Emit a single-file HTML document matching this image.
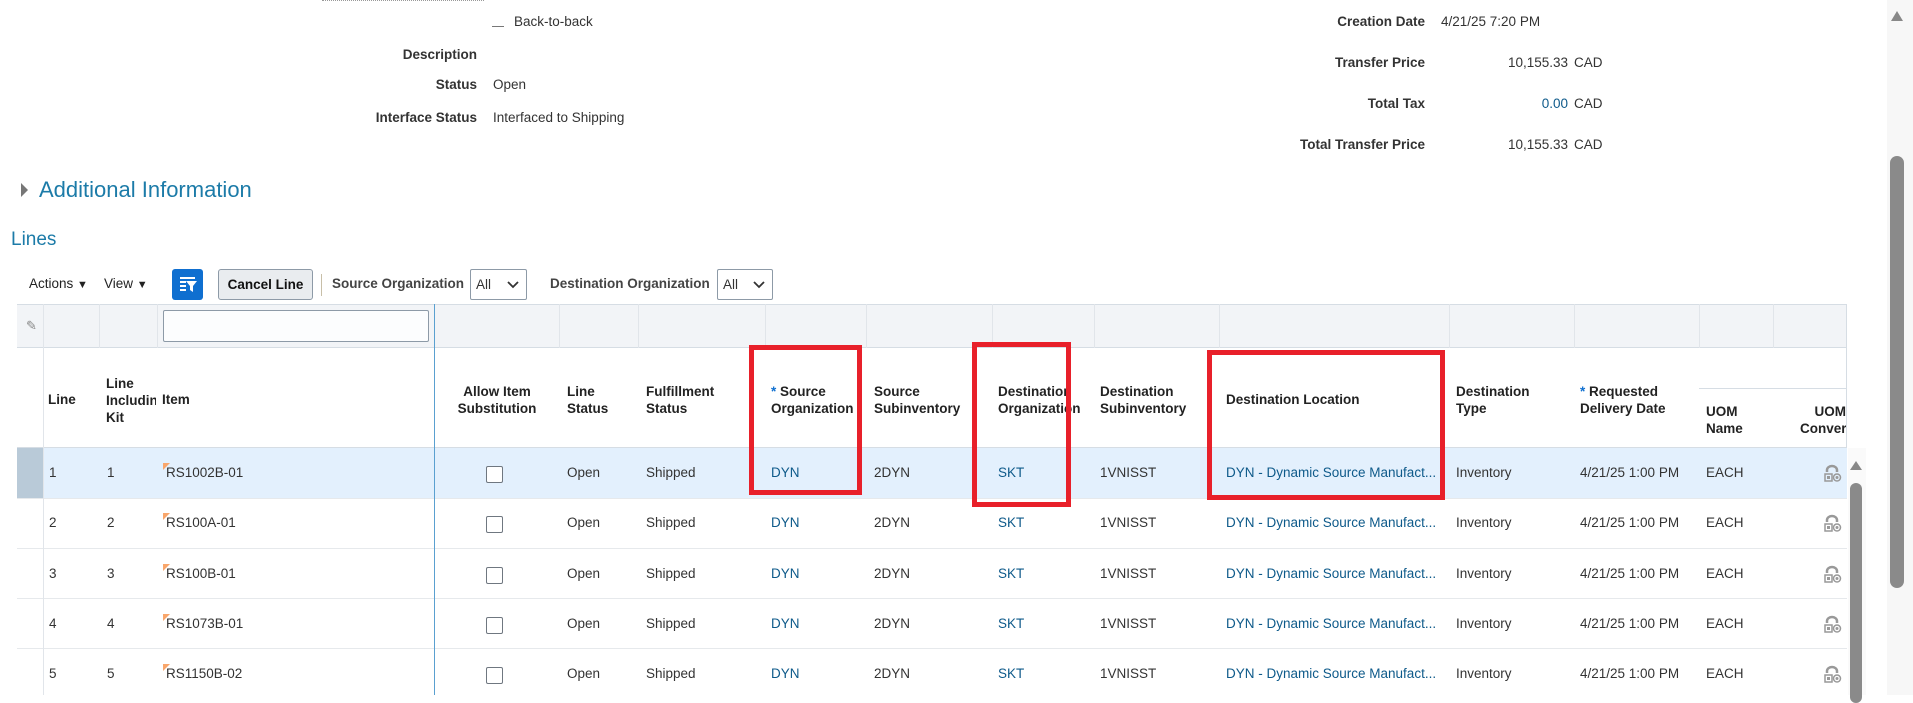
<!DOCTYPE html>
<html><head><meta charset="utf-8"><style>
*{margin:0;padding:0;box-sizing:border-box}
body{width:1913px;height:695px;overflow:hidden;background:#fff;font-family:"Liberation Sans",Arial,sans-serif;font-size:13.5px;color:#333;position:relative}
.a{position:absolute;white-space:nowrap}
.lb{font-weight:bold;color:#333;text-align:right}
.lnk{color:#0e5a8a}
.hd{font-weight:bold;color:#222;line-height:17px;font-size:13.5px}
.vl{position:absolute;width:1px;background:#e1e5ea}
.cb{position:absolute;width:17px;height:17px;border:1px solid #6f7780;border-radius:2px;background:#fff}
.tri{position:absolute;width:0;height:0;border-left:7px solid #f9a66b;border-bottom:7px solid transparent}
.rb{position:absolute;border:5px solid #e8202a}
</style></head><body>
<div class="a" style="left:322px;top:0;width:162px;height:1px;border-top:1px dotted #999"></div>
<div class="a" style="left:492px;top:26px;width:12px;height:1px;background:#777"></div>
<div class="a" style="left:514px;top:14px">Back-to-back</div>
<div class="a lb" style="right:1436px;top:47px">Description</div>
<div class="a lb" style="right:1436px;top:77px">Status</div>
<div class="a" style="left:493px;top:77px">Open</div>
<div class="a lb" style="right:1436px;top:110px">Interface Status</div>
<div class="a" style="left:493px;top:110px">Interfaced to Shipping</div>

<div class="a lb" style="right:488px;top:14px">Creation Date</div>
<div class="a" style="left:1441px;top:14px">4/21/25 7:20 PM</div>
<div class="a lb" style="right:488px;top:55px">Transfer Price</div>
<div class="a" style="right:345px;top:55px">10,155.33</div><div class="a" style="left:1574px;top:55px">CAD</div>
<div class="a lb" style="right:488px;top:96px">Total Tax</div>
<div class="a lnk" style="right:345px;top:96px">0.00</div><div class="a" style="left:1574px;top:96px">CAD</div>
<div class="a lb" style="right:488px;top:137px">Total Transfer Price</div>
<div class="a" style="right:345px;top:137px">10,155.33</div><div class="a" style="left:1574px;top:137px">CAD</div>

<div class="a" style="left:21px;top:183px;border-left:7px solid #777;border-top:7px solid transparent;border-bottom:7px solid transparent"></div>
<div class="a" style="left:39px;top:177px;font-size:22px;color:#1c7ba8">Additional Information</div>
<div class="a" style="left:11px;top:229px;font-size:19px;color:#1c7ba8">Lines</div>

<div class="a" style="left:29px;top:276px;color:#222">Actions <span style="font-size:11px">&#9660;</span></div>
<div class="a" style="left:104px;top:276px;color:#222">View <span style="font-size:11px">&#9660;</span></div>
<div class="a" style="left:172px;top:269px;width:31px;height:31px;background:#0f6fd0;border-radius:3px">
<svg width="31" height="31" viewBox="0 0 31 31"><g fill="#fff"><rect x="8" y="8" width="15" height="2"/><rect x="8" y="12" width="6" height="2"/><rect x="8" y="16" width="6" height="2"/><rect x="8" y="20" width="6" height="2"/><path d="M14 12h11l-4 5v6l-3-2v-4z"/></g></svg></div>
<div class="a" style="left:218px;top:269px;width:95px;height:31px;border:1px solid #8d9aa7;border-radius:3px;background:#e9ecef;font-weight:bold;color:#111;text-align:center;line-height:29px">Cancel Line</div>
<div class="a" style="left:321px;top:274px;width:1px;height:22px;background:#c8bfa8"></div>
<div class="a" style="left:332px;top:276px;font-weight:bold;color:#444">Source Organization</div>
<div class="a" style="left:470px;top:269px;width:57px;height:31px;border:1px solid #8d9aa7;border-radius:2px;padding:7px 5px">All<svg style="position:absolute;right:7px;top:11px" width="12" height="8" viewBox="0 0 12 8"><path d="M1 1l5 5 5-5" fill="none" stroke="#333" stroke-width="1.8"/></svg></div>
<div class="a" style="left:550px;top:276px;font-weight:bold;color:#444">Destination Organization</div>
<div class="a" style="left:717px;top:269px;width:56px;height:31px;border:1px solid #8d9aa7;border-radius:2px;padding:7px 5px">All<svg style="position:absolute;right:7px;top:11px" width="12" height="8" viewBox="0 0 12 8"><path d="M1 1l5 5 5-5" fill="none" stroke="#333" stroke-width="1.8"/></svg></div>

<div class="a" style="left:17px;top:304px;width:1830px;height:44px;background:#f2f4f7;border-top:1px solid #d6dde4;border-bottom:1px solid #d6dde4"></div>
<div class="a" style="left:26px;top:318px;font-size:13px;color:#888">&#9998;</div>
<div class="a" style="left:163px;top:310px;width:266px;height:32px;border:1px solid #8d9aa7;border-radius:2px;background:#fcfdfe"></div>
<div class="a" style="left:17px;top:448px;width:1830px;height:50px;background:#e3f0fd"></div>
<div class="a" style="left:17px;top:448px;width:26px;height:50px;background:#b9cad8"></div>
<div class="a" style="left:17px;top:447px;width:1830px;height:1px;background:#d6dde4"></div>
<div class="a" style="left:17px;top:498px;width:1830px;height:1px;background:#e6e9ec"></div>
<div class="a" style="left:17px;top:548px;width:1830px;height:1px;background:#e6e9ec"></div>
<div class="a" style="left:17px;top:598px;width:1830px;height:1px;background:#e6e9ec"></div>
<div class="a" style="left:17px;top:648px;width:1830px;height:1px;background:#e6e9ec"></div>
<div class="a" style="left:1699px;top:388px;width:148px;height:1px;background:#d6dde4"></div>
<div class="vl" style="left:43px;top:304px;height:391px"></div>
<div class="vl" style="left:99px;top:304px;height:44px"></div>
<div class="vl" style="left:157px;top:304px;height:44px"></div>
<div class="a" style="left:434px;top:304px;width:1px;height:391px;background:#5aa0d0"></div>
<div class="vl" style="left:559px;top:304px;height:44px"></div>
<div class="vl" style="left:638px;top:304px;height:44px"></div>
<div class="vl" style="left:765px;top:304px;height:44px"></div>
<div class="vl" style="left:866px;top:304px;height:44px"></div>
<div class="vl" style="left:992px;top:304px;height:44px"></div>
<div class="vl" style="left:1094px;top:304px;height:44px"></div>
<div class="vl" style="left:1219px;top:304px;height:44px"></div>
<div class="vl" style="left:1449px;top:304px;height:44px"></div>
<div class="vl" style="left:1574px;top:304px;height:44px"></div>
<div class="vl" style="left:1699px;top:304px;height:44px"></div>
<div class="vl" style="left:1773px;top:304px;height:44px"></div>
<div class="vl" style="left:1846px;top:304px;height:144px;background:#d6dde4"></div>

<div class="a hd" style="left:48px;top:391px">Line</div>
<div class="a hd" style="left:106px;top:375px;width:50px;overflow:hidden">Line<br>Including<br>Kit</div>
<div class="a hd" style="left:162px;top:391px">Item</div>
<div class="a hd" style="left:452px;top:383px;text-align:center;width:90px">Allow Item<br>Substitution</div>
<div class="a hd" style="left:567px;top:383px">Line<br>Status</div>
<div class="a hd" style="left:646px;top:383px">Fulfillment<br>Status</div>
<div class="a hd" style="left:771px;top:383px;width:92px;overflow:hidden"><span style="color:#0f6fd0">*</span> Source<br>Organization</div>
<div class="a hd" style="left:874px;top:383px;width:118px;overflow:hidden">Source<br>Subinventory</div>
<div class="a hd" style="left:998px;top:383px">Destination<br>Organization</div>
<div class="a hd" style="left:1100px;top:383px">Destination<br>Subinventory</div>
<div class="a hd" style="left:1226px;top:391px">Destination Location</div>
<div class="a hd" style="left:1456px;top:383px">Destination<br>Type</div>
<div class="a hd" style="left:1580px;top:383px"><span style="color:#0f6fd0">*</span> Requested<br>Delivery Date</div>
<div class="a hd" style="left:1706px;top:403px">UOM<br>Name</div>
<div class="a hd" style="left:1800px;top:403px;width:46px;overflow:hidden;text-align:right">UOM<br>Conversion</div>

<div id="rows"></div>
<script>
var items=["RS1002B-01","RS100A-01","RS100B-01","RS1073B-01","RS1150B-02"],h="";
for(var i=0;i<5;i++){var y=448+i*50.3,t=y+17;
h+='<div class="a" style="left:49px;top:'+t+'px">'+(i+1)+'</div>';
h+='<div class="a" style="left:107px;top:'+t+'px">'+(i+1)+'</div>';
h+='<div class="tri" style="left:163px;top:'+(t-2)+'px"></div>';
h+='<div class="a" style="left:166px;top:'+t+'px">'+items[i]+'</div>';
h+='<div class="cb" style="left:486px;top:'+(t+1)+'px"></div>';
h+='<div class="a" style="left:567px;top:'+t+'px">Open</div>';
h+='<div class="a" style="left:646px;top:'+t+'px">Shipped</div>';
h+='<div class="a lnk" style="left:771px;top:'+t+'px">DYN</div>';
h+='<div class="a" style="left:874px;top:'+t+'px">2DYN</div>';
h+='<div class="a lnk" style="left:998px;top:'+t+'px">SKT</div>';
h+='<div class="a" style="left:1100px;top:'+t+'px">1VNISST</div>';
h+='<div class="a lnk" style="left:1226px;top:'+t+'px">DYN - Dynamic Source Manufact...</div>';
h+='<div class="a" style="left:1456px;top:'+t+'px">Inventory</div>';
h+='<div class="a" style="left:1580px;top:'+t+'px">4/21/25 1:00 PM</div>';
h+='<div class="a" style="left:1706px;top:'+t+'px">EACH</div>';
h+='<svg class="a" style="left:1824px;top:'+(t-1)+'px" width="18" height="20" viewBox="0 0 18 20"><path d="M3 8V6a5 4 0 0 1 10 0v2" fill="none" stroke="#999" stroke-width="2.5"/><rect x="1" y="10" width="7" height="7" fill="none" stroke="#999" stroke-width="1.5"/><rect x="3" y="12" width="3" height="3" fill="#999"/><circle cx="13" cy="13.5" r="3.5" fill="none" stroke="#999" stroke-width="1.5"/><circle cx="13" cy="13.5" r="1.5" fill="#999"/></svg>';
}
document.getElementById("rows").innerHTML=h;
</script>

<div class="a" style="left:1848px;top:448px;width:18px;height:247px;background:#fafafa"></div>
<div class="a" style="left:1850px;top:461px;border-left:6px solid transparent;border-right:6px solid transparent;border-bottom:9px solid #888"></div>
<div class="a" style="left:1850px;top:483px;width:12px;height:220px;background:#8a8a8a;border-radius:6px"></div>
<div class="a" style="left:1887px;top:0;width:26px;height:695px;background:#f7f7f7"></div>
<div class="a" style="left:1891px;top:11px;border-left:6px solid transparent;border-right:6px solid transparent;border-bottom:10px solid #888"></div>
<div class="a" style="left:1890px;top:156px;width:14px;height:432px;background:#8a8a8a;border-radius:7px"></div>

<div class="rb" style="left:749px;top:345px;width:113px;height:150px"></div>
<div class="rb" style="left:972px;top:342px;width:99px;height:165px"></div>
<div class="rb" style="left:1207px;top:350px;width:238px;height:150px"></div>
</body></html>
